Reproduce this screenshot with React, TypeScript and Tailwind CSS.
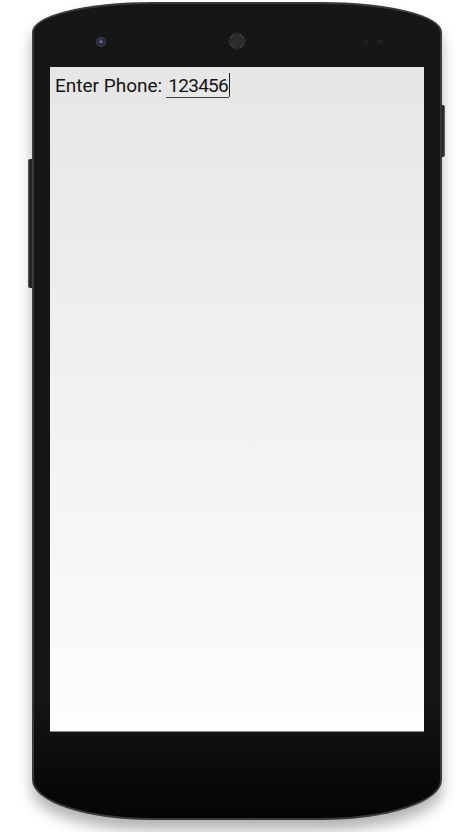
import React from 'react'

const Speaker = () => (
    <svg width="18" height="18" viewBox="0 0 18 18" className="mt-[28px]">
        <circle cx="9" cy="9" r="9" fill="#202020" />
        <circle cx="9" cy="9" r="7.6" fill="#424242" />
        {[-6, -4, -2, 0, 2, 4, 6].map((dy) =>
            [-6, -4, -2, 0, 2, 4, 6].map((dx) =>
                dx * dx + dy * dy <= 44 ? (
                    <circle key={`${dx}-${dy}`} cx={9 + dx} cy={9 + dy} r="0.85" fill="#161616" />
                ) : null
            )
        )}
    </svg>
)

const Camera = () => (
    <svg width="10" height="10" viewBox="0 0 10 10" className="mt-[33px]">
        <defs>
            <radialGradient id="lens" cx="50%" cy="45%" r="50%">
                <stop offset="0%" stopColor="#9a96d8" />
                <stop offset="45%" stopColor="#3a3778" />
                <stop offset="100%" stopColor="#1a1a24" />
            </radialGradient>
        </defs>
        <circle cx="5" cy="5" r="5" fill="#3e3e42" />
        <circle cx="5" cy="5" r="3.6" fill="url(#lens)" />
    </svg>
)

const App = () => {
    return (
        <div className="w-[474px] h-[832px] bg-white flex items-start overflow-hidden font-['Roboto',sans-serif]">
            {/* left volume button */}
            <div className="mt-[159px] ml-[28px] w-[4px] h-[129px] rounded-l-[2px] bg-[#2c2c2c] border-l border-[#5a5a5a]" />

            {/* phone body */}
            <div className="mt-[2px] w-[410px] h-[818px] p-[2px] bg-[#3a3a3a] rounded-[120px_120px_120px_120px/30px_30px_40px_40px] shadow-[0_10px_14px_rgba(0,0,0,0.3)]">
                <div className="w-full h-full flex flex-col items-center rounded-[118px_118px_118px_118px/28px_28px_38px_38px] bg-linear-to-b from-[#161616] from-85% to-[#050505]">
                    {/* top bezel */}
                    <div className="w-full h-[63px] flex items-start pl-[62px]">
                        <Camera />
                        <div className="ml-[122px]">
                            <Speaker />
                        </div>
                        <div className="ml-[117px] mt-[35px] w-[6px] h-[6px] rounded-full bg-[#1f1f1f]" />
                        <div className="ml-[8px] mt-[35px] w-[6px] h-[6px] rounded-full bg-[#1f1f1f]" />
                    </div>

                    {/* screen */}
                    <div className="w-[374px] h-[665px] bg-linear-to-b from-[#e6e6e6] to-[#fdfdfd] border-b border-[#8a8a8a]">
                        <div className="pl-[5px] pt-[6px] flex items-start text-[19px] leading-[26px] text-[#141414]">
                            <span>Enter Phone:</span>
                            <div className="ml-[4px] w-[63px] h-[25px] flex items-start border-b border-[#444] pl-[2px]">
                                <span className="tracking-[-0.7px]">123456</span>
                                <div className="ml-[1px] w-px h-[24px] bg-[#222]" />
                            </div>
                        </div>
                    </div>
                </div>
            </div>

            {/* right power button */}
            <div className="mt-[105px] -ml-[1px] w-[4px] h-[52px] rounded-r-[2px] bg-[#2c2c2c] border-r border-[#5a5a5a]" />
        </div>
    )
}

export default App
